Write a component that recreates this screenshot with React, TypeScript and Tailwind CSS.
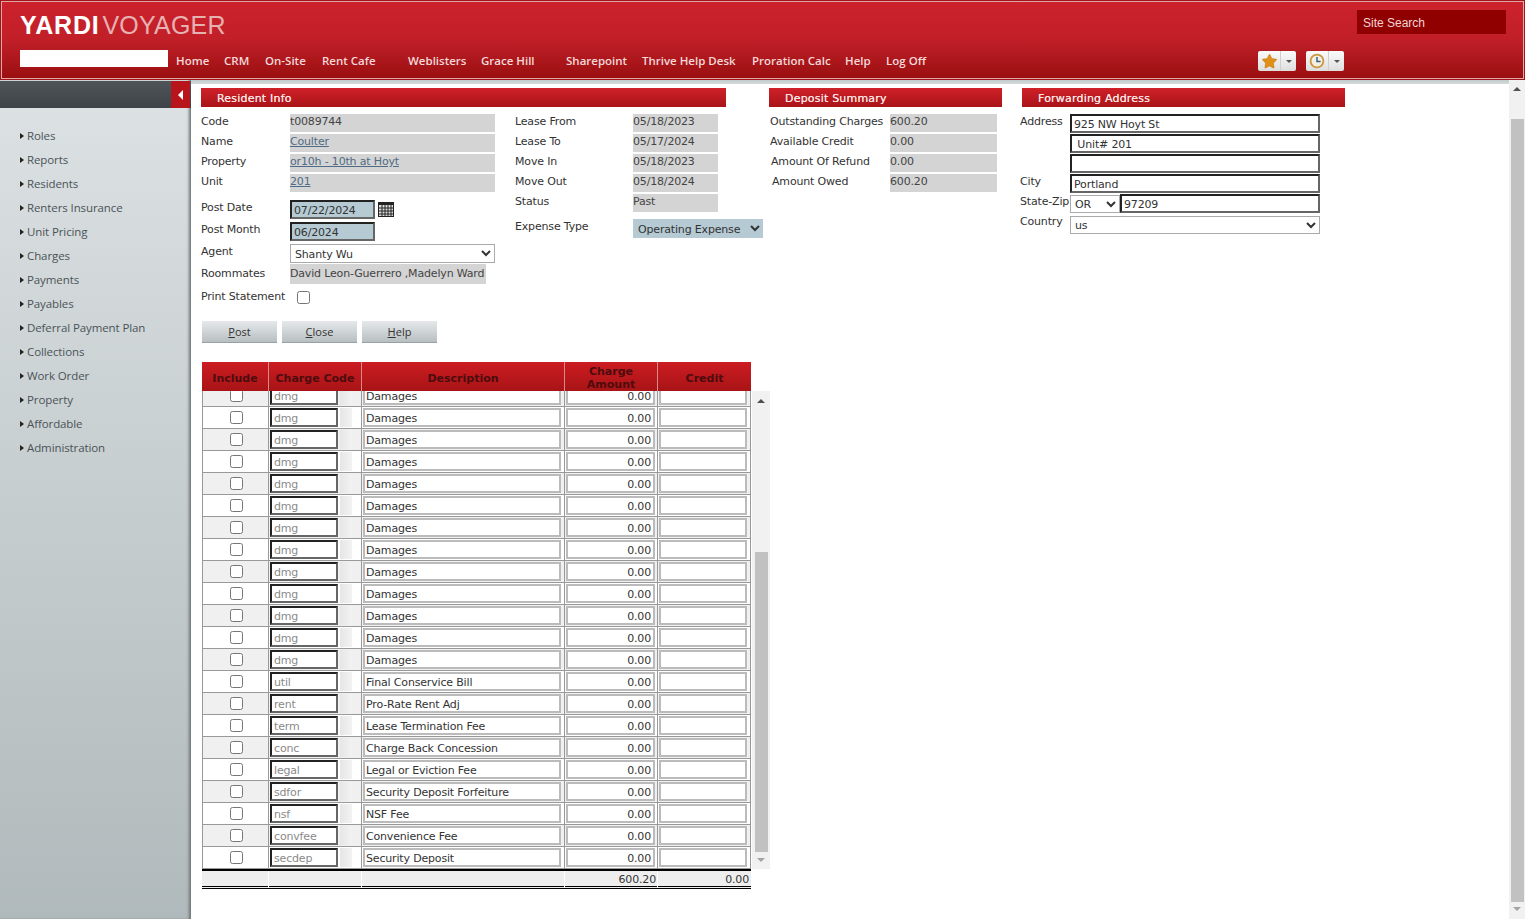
import { Star } from 'lucide-react';

const navItems = [
  { label: 'Home', width: 'w-[48px]' },
  { label: 'CRM', width: 'w-[41px]' },
  { label: 'On-Site', width: 'w-[57px]' },
  { label: 'Rent Cafe', width: 'w-[86px]' },
  { label: 'Weblisters', width: 'w-[73px]' },
  { label: 'Grace Hill', width: 'w-[85px]' },
  { label: 'Sharepoint', width: 'w-[76px]' },
  { label: 'Thrive Help Desk', width: 'w-[110px]' },
  { label: 'Proration Calc', width: 'w-[93px]' },
  { label: 'Help', width: 'w-[41px]' },
  { label: 'Log Off', width: 'w-[50px]' },
];

const menuItems = [
  'Roles',
  'Reports',
  'Residents',
  'Renters Insurance',
  'Unit Pricing',
  'Charges',
  'Payments',
  'Payables',
  'Deferral Payment Plan',
  'Collections',
  'Work Order',
  'Property',
  'Affordable',
  'Administration',
];

const charges = [
  ...Array.from({ length: 13 }, () => ({ code: 'dmg', description: 'Damages' })),
  { code: 'util', description: 'Final Conservice Bill' },
  { code: 'rent', description: 'Pro-Rate Rent Adj' },
  { code: 'term', description: 'Lease Termination Fee' },
  { code: 'conc', description: 'Charge Back Concession' },
  { code: 'legal', description: 'Legal or Eviction Fee' },
  { code: 'sdfor', description: 'Security Deposit Forfeiture' },
  { code: 'nsf', description: 'NSF Fee' },
  { code: 'convfee', description: 'Convenience Fee' },
  { code: 'secdep', description: 'Security Deposit' },
];

const insetBorder =
  'border-2 border-t-[#222222] border-l-[#222222] border-r-[#666666] border-b-[#666666]';
const tableCols = 'grid grid-cols-[67px_93px_203px_93px_93px]';
// the body rows carry a 1px left border, so their first column is 1px narrower
const rowCols = 'grid grid-cols-[66px_93px_203px_93px_93px]';

function SectionTitle({ title, width }: { title: string; width: string }) {
  return (
    <div
      className={`${width} h-[19px] bg-gradient-to-b from-[#d02029] to-[#a91418] pl-[16px] text-[11px] leading-[21px] tracking-[0.2px] text-[#fbe3e3] [text-shadow:0_0_0.5px_#fbe3e3]`}>
      {title}
    </div>
  );
}

function ReadRow({
  label,
  value,
  labelWidth,
  boxWidth,
  link,
  labelPad = '',
}: {
  label: string;
  value: string;
  labelWidth: string;
  boxWidth: string;
  link?: boolean;
  labelPad?: string;
}) {
  return (
    <div className="mb-[2px] flex h-[18px] leading-[16px]">
      <div className={`${labelWidth} ${labelPad} shrink-0 whitespace-nowrap`}>{label}</div>
      <div
        className={`${boxWidth} h-[18px] shrink-0 bg-[#d4d4d4] ${link ? 'text-[#4f6b85] underline' : 'text-[#444444]'}`}>
        {value}
      </div>
    </div>
  );
}

function FormInput({ value, width }: { value?: string; width: string }) {
  return (
    <div
      className={`${width} ${insetBorder} h-[19px] shrink-0 bg-white pl-[2px] text-[11px] leading-[17px] whitespace-pre text-[#333333]`}>
      {value}
    </div>
  );
}

function CalendarIcon() {
  return (
    <svg width="16" height="15" viewBox="0 0 16 15" className="mt-[2px] ml-[3px]">
      <rect x="0" y="0" width="16" height="15" fill="#222222" />
      <rect x="1" y="3" width="14" height="11" fill="#dddddd" />
      <path
        d="M4 3v11M7 3v11M10 3v11M13 3v11M1 6h14M1 9h14M1 12h14"
        stroke="#222222"
        strokeWidth="1"
      />
    </svg>
  );
}

function HistoryIcon() {
  return (
    <svg width="16" height="16" viewBox="0 0 16 16">
      <circle cx="8" cy="8" r="6.4" fill="#f4efe2" stroke="#c9973f" strokeWidth="1.8" />
      <path d="M8 4v4.4h3.6" fill="none" stroke="#3b5f8a" strokeWidth="1.5" />
    </svg>
  );
}

function MenuButton({ children }: { children: React.ReactNode }) {
  return (
    <div className="flex h-[20px] w-[38px] rounded-[2px] bg-gradient-to-b from-[#fbfbfb] to-[#dedede]">
      <div className="flex w-[23px] items-center justify-center border-r border-[#cfcfcf]">
        {children}
      </div>
      <div className="flex flex-1 items-center justify-center">
        <span className="h-0 w-0 border-x-[3px] border-t-[3px] border-x-transparent border-t-[#555555]" />
      </div>
    </div>
  );
}

function Header() {
  return (
    <header className="h-[80px] shrink-0 bg-[#a51218] p-px">
      <div className="h-full border border-[#dfa9a9] bg-gradient-to-b from-[#cc222c] via-[#c11f28] to-[#9a0f10] font-['Liberation_Sans',sans-serif] tracking-normal">
        <div className="flex h-[48px] justify-between pt-[8px] pr-[17px] pl-[18px]">
          <div className="mt-[1px] text-[25px] leading-[29px] whitespace-nowrap text-white">
            <span className="font-bold tracking-[0.8px]">YARDI</span>
            <span className="ml-[3px] tracking-[0.2px] text-[#e6b1b1]">VOYAGER</span>
          </div>
          <div className="h-[24px] w-[149px] bg-[#900000] pl-[6px] text-[12px] leading-[27px] text-[#f3d5d5]">
            Site Search
          </div>
        </div>
        <div className="flex pr-[179px] pl-[18px]">
          <div className="h-[17px] w-[148px] bg-white" />
          <nav className="ml-[8px] flex font-['Open_Sans',sans-serif] text-[11.5px] leading-[22px] font-semibold text-[#f4d9d9]">
            {navItems.map((item) => (
              <span key={item.label} className={`${item.width} whitespace-nowrap`}>
                {item.label}
              </span>
            ))}
          </nav>
          <div className="mt-px ml-auto flex gap-[10px]">
            <MenuButton>
              <Star size={17} fill="#e08f17" stroke="#c97a10" strokeWidth={1} />
            </MenuButton>
            <MenuButton>
              <HistoryIcon />
            </MenuButton>
          </div>
        </div>
      </div>
    </header>
  );
}

function Sidebar() {
  return (
    <aside className="flex w-[191px] shrink-0 flex-col bg-gradient-to-b from-[#dde2e4] to-[#b0b9bb] shadow-[inset_-3px_0_3px_-1px_#6f7678]">
      <div className="mt-px flex h-[27px] justify-end bg-gradient-to-b from-[#4f5559] to-[#3d4347] pr-px">
        <div className="flex w-[19px] items-center justify-center bg-[#b8141b]">
          <span className="h-0 w-0 border-y-[5px] border-r-[5px] border-y-transparent border-r-white" />
        </div>
      </div>
      <ul className="pt-[16px] pl-[20px] font-['Open_Sans',sans-serif] text-[11.5px] leading-[24px] tracking-[-0.1px] text-[#4a5358]">
        {menuItems.map((item) => (
          <li key={item} className="flex h-[24px] items-center">
            <span className="mr-[3px] h-0 w-0 border-y-[3.5px] border-l-[4px] border-y-transparent border-l-[#222222]" />
            {item}
          </li>
        ))}
      </ul>
    </aside>
  );
}

function ResidentInfo() {
  return (
    <section className="w-[525px]">
      <SectionTitle title="Resident Info" width="w-[525px]" />
      <div className="mt-[7px] flex">
        <div className="w-[314px] shrink-0">
          <ReadRow label="Code" value="t0089744" labelWidth="w-[89px]" boxWidth="w-[205px]" />
          <ReadRow label="Name" value="Coulter" labelWidth="w-[89px]" boxWidth="w-[205px]" link />
          <ReadRow
            label="Property"
            value="or10h - 10th at Hoyt"
            labelWidth="w-[89px]"
            boxWidth="w-[205px]"
            link
          />
          <ReadRow label="Unit" value="201" labelWidth="w-[89px]" boxWidth="w-[205px]" link />
          <div className="mt-[8px] flex h-[19px] leading-[16px]">
            <div className="w-[89px]">Post Date</div>
            <div className={`${insetBorder} h-[19px] w-[85px] bg-[#b5cad3] pl-[2px] leading-[17px]`}>
              07/22/2024
            </div>
            <CalendarIcon />
          </div>
          <div className="mt-[3px] flex h-[19px] leading-[16px]">
            <div className="w-[89px]">Post Month</div>
            <div className={`${insetBorder} h-[19px] w-[85px] bg-[#b5cad3] pl-[2px] leading-[17px]`}>
              06/2024
            </div>
          </div>
          <div className="mt-[3px] flex h-[19px] leading-[16px]">
            <div className="w-[89px]">Agent</div>
            <select className="h-[19px] w-[205px] border border-[#aaaaaa] bg-white pt-[2px] text-[11px] text-[#333333]">
              <option>Shanty Wu</option>
            </select>
          </div>
          <div className="mt-px flex h-[20px] items-center">
            <div className="w-[89px]">Roommates</div>
            <div className="h-[20px] w-[196px] bg-[#d4d4d4] leading-[19px] whitespace-nowrap text-[#444444]">
              David Leon-Guerrero ,Madelyn Ward
            </div>
          </div>
          <div className="mt-[3px] flex h-[20px] items-center">
            <div className="w-[96px] pt-px whitespace-nowrap">Print Statement</div>
            <input type="checkbox" className="h-[13px] w-[13px]" />
          </div>
        </div>
        <div className="w-[211px] shrink-0">
          <ReadRow label="Lease From" value="05/18/2023" labelWidth="w-[118px]" boxWidth="w-[85px]" />
          <ReadRow label="Lease To" value="05/17/2024" labelWidth="w-[118px]" boxWidth="w-[85px]" />
          <ReadRow label="Move In" value="05/18/2023" labelWidth="w-[118px]" boxWidth="w-[85px]" />
          <ReadRow label="Move Out" value="05/18/2024" labelWidth="w-[118px]" boxWidth="w-[85px]" />
          <ReadRow label="Status" value="Past" labelWidth="w-[118px]" boxWidth="w-[85px]" />
          <div className="mt-[7px] flex leading-[16px]">
            <div className="w-[118px] shrink-0">Expense Type</div>
            <select className="h-[19px] w-[130px] shrink-0 bg-[#b5cad3] pt-[2px] pl-[1px] text-[11px] text-[#333333]">
              <option>Operating Expense</option>
            </select>
          </div>
        </div>
      </div>
    </section>
  );
}

function DepositSummary() {
  return (
    <section className="ml-[43px] w-[233px]">
      <SectionTitle title="Deposit Summary" width="w-[233px]" />
      <div className="mt-[7px]">
        <ReadRow label="Outstanding Charges" value="600.20" labelWidth="w-[121px]" boxWidth="w-[107px]" labelPad="pl-[1px]" />
        <ReadRow label="Available Credit" value="0.00" labelWidth="w-[121px]" boxWidth="w-[107px]" labelPad="pl-[1px]" />
        <ReadRow label="Amount Of Refund" value="0.00" labelWidth="w-[121px]" boxWidth="w-[107px]" labelPad="pl-[2px]" />
        <ReadRow label="Amount Owed" value="600.20" labelWidth="w-[121px]" boxWidth="w-[107px]" labelPad="pl-[3px]" />
      </div>
    </section>
  );
}

function ForwardingAddress() {
  return (
    <section className="ml-[20px] w-[323px]">
      <SectionTitle title="Forwarding Address" width="w-[323px]" />
      <div className="mt-[7px] -ml-[2px] leading-[16px]">
        <div className="flex h-[20px]">
          <div className="w-[50px] shrink-0">Address</div>
          <FormInput value="925 NW Hoyt St" width="w-[250px]" />
        </div>
        <div className="flex h-[20px]">
          <div className="w-[50px] shrink-0" />
          <FormInput value=" Unit# 201" width="w-[250px]" />
        </div>
        <div className="flex h-[20px]">
          <div className="w-[50px] shrink-0" />
          <FormInput width="w-[250px]" />
        </div>
        <div className="flex h-[20px]">
          <div className="w-[50px] shrink-0">City</div>
          <FormInput value="Portland" width="w-[250px]" />
        </div>
        <div className="flex h-[20px]">
          <div className="w-[50px] shrink-0 whitespace-nowrap">State-Zip</div>
          <select className="mt-px h-[18px] w-[50px] shrink-0 border border-[#aaaaaa] bg-white text-[11px] text-[#333333]">
            <option>OR</option>
          </select>
          <FormInput value="97209" width="w-[200px]" />
        </div>
        <div className="mt-[2px] flex h-[18px]">
          <div className="w-[50px] shrink-0 leading-[12px]">Country</div>
          <select className="h-[18px] w-[250px] shrink-0 border border-[#aaaaaa] bg-white text-[11px] text-[#333333]">
            <option>us</option>
          </select>
        </div>
      </div>
    </section>
  );
}

function ActionButton({ hotkey, rest }: { hotkey: string; rest: string }) {
  return (
    <button className="h-[22px] w-[75px] border-b border-[#9aa1a4] bg-gradient-to-b from-[#e6e9ea] to-[#b8bfc2] pt-[2px] font-['Open_Sans',sans-serif] text-[11px] tracking-normal text-[#333333]">
      <span className="underline">{hotkey}</span>
      {rest}
    </button>
  );
}

function ChargeRow({
  code,
  description,
  shaded,
  first,
}: {
  code: string;
  description: string;
  shaded: boolean;
  first: boolean;
}) {
  return (
    <div
      className={`${rowCols} h-[22px] border-b border-l border-[#999999] ${shaded ? 'bg-[#f0f0f0]' : 'bg-white'} ${first ? '-mt-[6px]' : ''}`}>
      <div className="flex items-center justify-center border-r border-[#999999] pl-[2px]">
        <input type="checkbox" className="h-[13px] w-[13px]" />
      </div>
      <div className="flex items-center gap-[2px] border-r border-[#999999] pl-px">
        <div className={`${insetBorder} h-[19px] w-[68px] bg-white pl-[2px] leading-[17px] text-[#8a8a8a]`}>
          {code}
        </div>
        <div className="h-[19px] w-[12px] bg-gradient-to-r from-[#e6e6e6] to-[#f2f2f2]" />
      </div>
      <div className="flex items-center border-r border-[#999999] pl-px">
        <div className="h-[19px] w-[198px] border-2 border-[#bbbbbb] bg-white pl-px leading-[17px]">
          {description}
        </div>
      </div>
      <div className="flex items-center border-r border-[#999999] pl-px">
        <div className="h-[19px] w-[89px] border-2 border-[#bbbbbb] bg-white pr-[2px] text-right leading-[17px]">
          0.00
        </div>
      </div>
      <div className="flex items-center border-r border-[#999999] pl-px">
        <div className="h-[19px] w-[88px] border-2 border-[#bbbbbb] bg-white" />
      </div>
    </div>
  );
}

function ChargesTable() {
  return (
    <div className="mt-[19px] ml-px w-[568px]">
      <div
        className={`${tableCols} h-[29px] w-[549px] bg-gradient-to-b from-[#cc1c22] to-[#a81416] text-center text-[11px] leading-[13px] font-bold tracking-normal text-[#4d0c0e]`}>
        <div className="border-r border-[#d88a8a] pt-[10px]">Include</div>
        <div className="border-r border-[#d88a8a] pt-[10px]">Charge Code</div>
        <div className="border-r border-[#d88a8a] pt-[10px]">Description</div>
        <div className="border-r border-[#d88a8a] pt-[3px]">
          Charge
          <br />
          Amount
        </div>
        <div className="pt-[10px]">Credit</div>
      </div>
      <div className="flex">
        <div className="h-[478px] w-[549px] overflow-hidden">
          {charges.map((charge, index) => (
            <ChargeRow
              key={`${charge.code}-${index}`}
              code={charge.code}
              description={charge.description}
              shaded={index % 2 === 0}
              first={index === 0}
            />
          ))}
        </div>
        <div className="ml-px flex h-[478px] w-[18px] flex-col items-center bg-[#f1f1f1]">
          <span className="mt-[8px] h-0 w-0 border-x-[4px] border-b-[4px] border-x-transparent border-b-[#505050]" />
          <div className="mt-[149px] h-[300px] w-[13px] bg-[#c1c1c1]" />
          <span className="mt-[6px] h-0 w-0 border-x-[4px] border-t-[4px] border-x-transparent border-t-[#a3a3a3]" />
        </div>
      </div>
      <div
        className={`${tableCols} h-[20px] w-[549px] border-t-2 border-b-[3px] border-t-black border-b-black bg-[#eeeeee] [border-bottom-style:double] leading-[17px]`}>
        <div className="border-r border-white" />
        <div className="border-r border-white" />
        <div className="border-r border-white" />
        <div className="border-r border-white pr-px text-right">600.20</div>
        <div className="pr-[2px] text-right">0.00</div>
      </div>
    </div>
  );
}

function PageScrollbar() {
  return (
    <div className="flex w-[16px] shrink-0 flex-col items-center bg-[#f1f1f1]">
      <span className="mt-[7px] h-0 w-0 border-x-[4px] border-b-[4px] border-x-transparent border-b-[#505050]" />
      <div className="mt-[28px] h-[783px] w-[13px] bg-[#c1c1c1]" />
      <span className="mt-[5px] h-0 w-0 border-x-[4px] border-t-[4px] border-x-transparent border-t-[#a3a3a3]" />
    </div>
  );
}

export default function App() {
  return (
    <div className="flex h-[919px] w-[1525px] flex-col overflow-hidden bg-white font-['DejaVu_Sans',sans-serif] text-[11px] tracking-[-0.17px] text-[#333333]">
      <Header />
      <div className="flex min-h-0 flex-1">
        <Sidebar />
        <main className="min-w-0 flex-1">
          <div className="h-[4px] bg-gradient-to-b from-[#c3c9cc] to-[#d5dadc]" />
          <div className="pt-[4px] pl-[10px]">
            <div className="flex items-start">
              <ResidentInfo />
              <DepositSummary />
              <ForwardingAddress />
            </div>
            <div className="mt-[14px] flex gap-[5px] pl-px">
              <ActionButton hotkey="P" rest="ost" />
              <ActionButton hotkey="C" rest="lose" />
              <ActionButton hotkey="H" rest="elp" />
            </div>
            <ChargesTable />
          </div>
        </main>
        <PageScrollbar />
      </div>
    </div>
  );
}
